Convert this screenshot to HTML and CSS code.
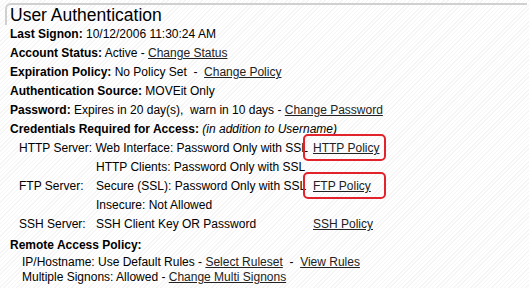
FILE: index.html
```html
<!DOCTYPE html>
<html>
<head>
<meta charset="utf-8">
<title>User Authentication</title>
<link rel="stylesheet" href="styles.css">
</head>
<body>
<div class="panel">
  <h1 class="title">User Authentication</h1>
  <div class="info">
    <div class="row"><b>Last Signon:</b> 10/12/2006 11:30:24 AM</div>
    <div class="row"><b>Account Status:</b> Active - <a href="#">Change Status</a></div>
    <div class="row"><b>Expiration Policy:</b> No Policy Set &nbsp;- &nbsp;<a href="#">Change Policy</a></div>
    <div class="row"><b>Authentication Source:</b> MOVEit Only</div>
    <div class="row"><b>Password:</b> Expires in 20 day(s), &nbsp;warn in 10 days - <a href="#">Change Password</a></div>
    <div class="row"><b>Credentials Required for Access:</b> <i>(in addition to Username)</i></div>
    <div class="creds">
      <div class="span2">HTTP Server: Web Interface: Password Only with SSL</div>
      <div class="pol boxed"><a href="#">HTTP Policy</a></div>
      <div></div>
      <div>HTTP Clients: Password Only with SSL</div>
      <div></div>
      <div>FTP Server:</div>
      <div>Secure (SSL): Password Only with SSL</div>
      <div class="pol boxed"><a href="#">FTP Policy</a></div>
      <div></div>
      <div>Insecure: Not Allowed</div>
      <div></div>
      <div>SSH Server:</div>
      <div>SSH Client Key OR Password</div>
      <div class="pol"><a href="#">SSH Policy</a></div>
    </div>
    <div class="row remote"><b>Remote Access Policy:</b></div>
    <div class="sub">IP/Hostname: Use Default Rules - <a href="#">Select Ruleset</a> &nbsp;- &nbsp;<a href="#">View Rules</a></div>
    <div class="sub">Multiple Signons: Allowed - <a href="#">Change Multi Signons</a></div>
  </div>
</div>
</body>
</html>
```
FILE: styles.css
```css
html, body {
  margin: 0;
  padding: 0;
}
body {
  background-color: #fdfdfd;
  background-image: repeating-linear-gradient(-45deg, #ffffff 0 2px, #f5f5f5 2px 3px);
  font-family: "Liberation Sans", Arial, sans-serif;
  font-size: 12px;
  color: #000;
  width: 529px;
  height: 288px;
  overflow: hidden;
}
.panel {
  padding: 3px 2px 0 5px;
}
.title {
  margin: 0;
  height: 20px;
  border-top: 2px solid #d0d0d0;
  border-left: 2px solid #d0d0d0;
  border-top-left-radius: 6px;
  padding-left: 3px;
  font-size: 17.5px;
  font-weight: normal;
  line-height: 20px;
}
.info {
  padding-left: 5px;
}
.row {
  line-height: 19px;
  white-space: nowrap;
}
a {
  color: #222;
  text-decoration: underline;
}
.creds {
  display: grid;
  grid-template-columns: 77px 217px auto;
  grid-auto-rows: 19px;
  line-height: 19px;
  padding: 0 0 1px 9px;
  white-space: nowrap;
}
.span2 {
  grid-column: 1 / 3;
}
.pol {
  position: relative;
}
.boxed::after {
  content: "";
  position: absolute;
  left: -10px;
  top: -5px;
  width: 79px;
  height: 23px;
  border: 2px solid #e3232b;
  border-radius: 5px;
  pointer-events: none;
}
.remote {
  line-height: 20px;
}
.sub {
  line-height: 15px;
  padding-left: 12px;
  white-space: nowrap;
}
```
